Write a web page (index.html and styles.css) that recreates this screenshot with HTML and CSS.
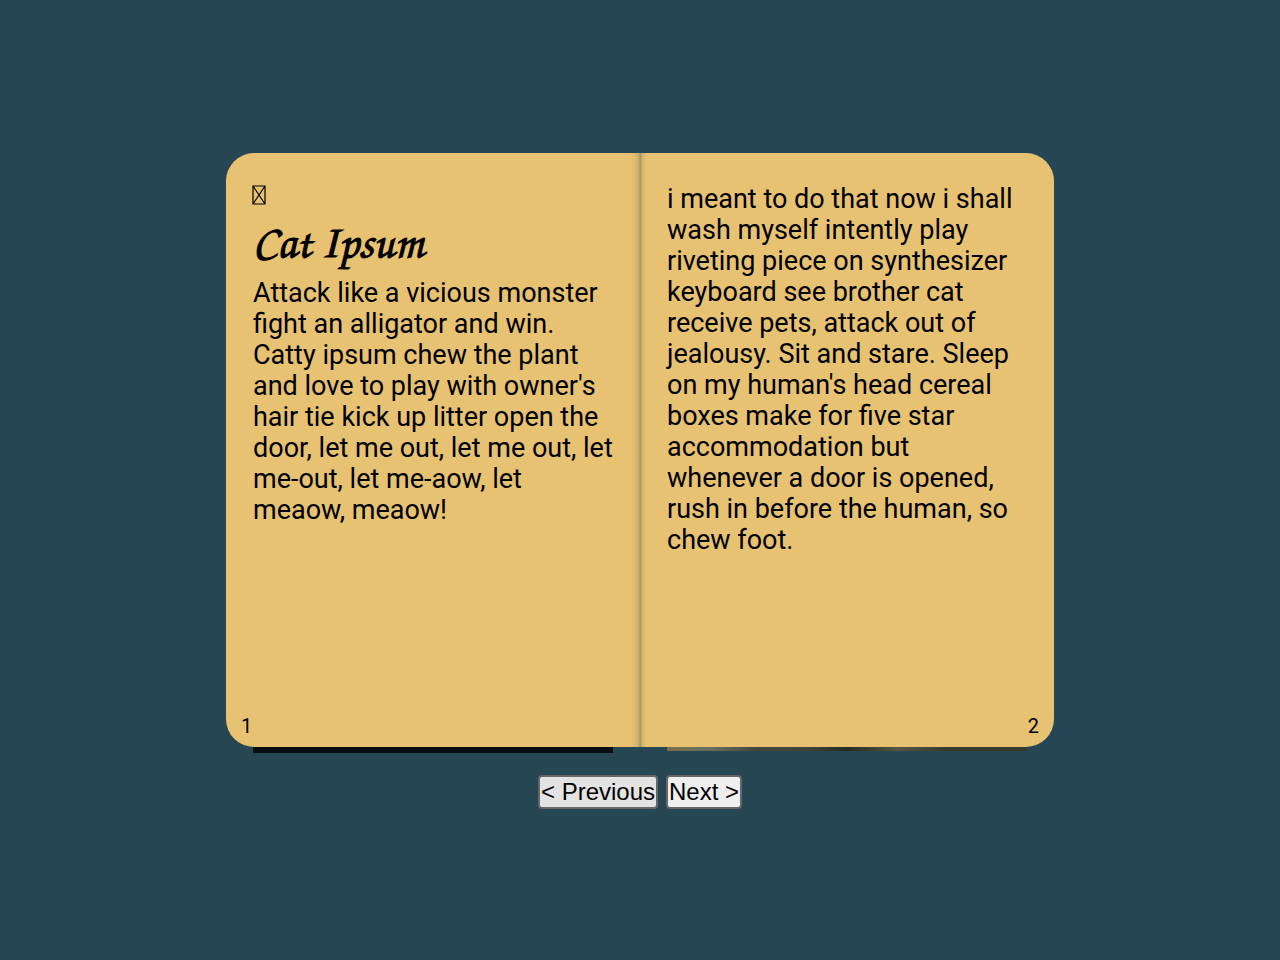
FILE: index.html
```html
<!DOCTYPE html>
<html lang="en">

<head>
    <meta charset="UTF-8">
    <meta name="viewport" content="width=device-width, initial-scale=1.0">
    <title>Cat Ipsum</title>
    <link rel="stylesheet" href="styles.css">
</head>

<body>
    <main class="book">
        <section class="leaf">
            <article class="page page-left">
                <svg class="glyph" viewBox="0 0 14 20" width="14" height="20" aria-hidden="true">
                    <path d="M1 1H13V19H1ZM1 1L13 19M13 1L1 19" fill="none" stroke="#000" stroke-width="1.2" />
                </svg>
                <h1 class="title">Cat Ipsum</h1>
                <p>Attack like a vicious monster fight an alligator and win. Catty ipsum chew the plant and love to play with owner's hair tie kick up litter open the door, let me out, let me out, let me-out, let me-aow, let meaow, meaow!</p>
                <span class="number">1</span>
            </article>
            <div class="edge edge-left"></div>
        </section>
        <section class="leaf">
            <article class="page page-right">
                <p>i meant to do that now i shall wash myself intently play riveting piece on synthesizer keyboard see brother cat receive pets, attack out of jealousy. Sit and stare. Sleep on my human's head cereal boxes make for five star accommodation but whenever a door is opened, rush in before the human, so chew foot.</p>
                <span class="number">2</span>
            </article>
            <div class="edge edge-right"></div>
        </section>
    </main>

    <nav class="controls">
        <button type="button" class="previous">&lt; Previous</button>
        <button type="button" class="next">Next &gt;</button>
    </nav>
</body>

</html>
```
FILE: styles.css
```css
* {
    box-sizing: border-box;
}

body {
    display: flex;
    flex-direction: column;
    align-items: center;
    justify-content: center;
    min-height: 100vh;
    margin: 0;
    padding-top: 2px;
    background-color: #264653;
    color: #000;
    font-family: Roboto, sans-serif;
    font-size: 27px;
    line-height: 31px;
}

p,
h1 {
    margin: 0;
}

.book {
    display: grid;
    grid-template-columns: 1fr 1fr;
    width: 90%;
    max-width: 828px;
}

.leaf {
    display: flex;
    flex-direction: column;
}

.page {
    display: flex;
    flex-direction: column;
    min-height: 594px;
    padding: 31px 24px 5px 27px;
    background-color: #e7c272;
}

.page-left {
    border-radius: 28px 0 0 28px;
    background-image: linear-gradient(to left, #a69a68, #d3b169 2px, #e7c272 9px);
}

.page-right {
    border-radius: 0 28px 28px 0;
    background-image: linear-gradient(to right, #8c9768, #d3b169 2px, #e7c272 6px);
}

.glyph {
    margin: 1px 0 6px -1px;
}

.title {
    margin: 14px 0 22px;
    font-family: "TeX Gyre Chorus", "Z003", "URW Chancery L", "Apple Chancery", cursive;
    font-size: 46px;
    font-weight: bold;
    -webkit-text-stroke: 1px #000;
}

.number {
    margin: auto -9px 0 -12px;
    font-size: 20px;
}

.page-right .number {
    text-align: right;
}

/* the pages lying underneath */
.edge {
    height: 6px;
    margin: 0 27px;
}

.edge-left {
    background-color: #090d0d;
}

.edge-right {
    height: 4px;
    background-image: linear-gradient(to right, #7c6d4d, #66705d 12%, #43453e 25%, #40423a 40%, #222c24 50%, #565543 64%, #38392e 78%, #38392e);
}

.controls {
    display: flex;
    gap: 8px;
    margin-top: 22px;
}

button {
    padding: 1px;
    border: 2px solid #666;
    border-radius: 4px;
    background-color: #eee;
    color: #000;
    font-family: "Liberation Sans", sans-serif;
    font-size: 24px;
    line-height: 28px;
    cursor: pointer;
}

.previous {
    background-color: #e3e3e3;
}
```
